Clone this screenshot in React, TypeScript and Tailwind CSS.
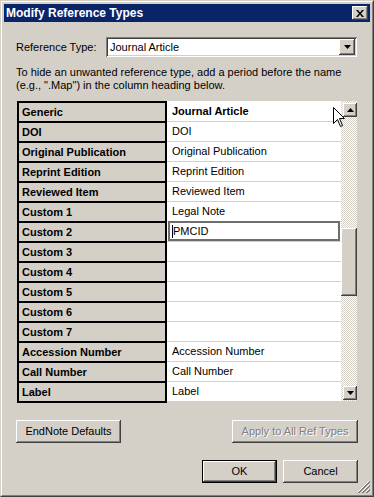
import React from 'react';

const raised =
  'bg-[#d4d0c8] shadow-[inset_-1px_-1px_#404040,inset_1px_1px_#ffffff,inset_-2px_-2px_#808080,inset_2px_2px_#d4d0c8]';
const sunken =
  'shadow-[inset_1px_1px_#808080,inset_-1px_-1px_#ffffff,inset_2px_2px_#404040,inset_-2px_-2px_#d4d0c8]';

const rows: [string, string][] = [
  ['Generic', 'Journal Article'],
  ['DOI', 'DOI'],
  ['Original Publication', 'Original Publication'],
  ['Reprint Edition', 'Reprint Edition'],
  ['Reviewed Item', 'Reviewed Item'],
  ['Custom 1', 'Legal Note'],
  ['Custom 2', 'PMCID'],
  ['Custom 3', ''],
  ['Custom 4', ''],
  ['Custom 5', ''],
  ['Custom 6', ''],
  ['Custom 7', ''],
  ['Accession Number', 'Accession Number'],
  ['Call Number', 'Call Number'],
  ['Label', 'Label'],
];

const Arrow = ({ up }: { up?: boolean }) => (
  <svg width="7" height="4" viewBox="0 0 7 4">
    {up ? <path d="M3.5 0 L7 4 L0 4 Z" fill="#000" /> : <path d="M0 0 L7 0 L3.5 4 Z" fill="#000" />}
  </svg>
);

const Button = ({
  children,
  className = '',
  disabled,
}: {
  children: React.ReactNode;
  className?: string;
  disabled?: boolean;
}) => (
  <div
    className={`${raised} h-[23px] flex items-center justify-center ${
      disabled ? 'text-[#808080] [text-shadow:1px_1px_0_#ffffff]' : 'text-black'
    } ${className}`}
  >
    {children}
  </div>
);

export default function App() {
  return (
    <div className="relative w-[374px] h-[497px] bg-[#d4d0c8] font-['Liberation_Sans',Arial,sans-serif] text-[11px] text-black select-none">
      <div className="w-full h-full border border-t-[#d4d0c8] border-l-[#d4d0c8] border-r-[#404040] border-b-[#404040]">
        <div className="relative w-full h-full border border-t-white border-l-white border-r-[#808080] border-b-[#808080] p-[2px] flex flex-col">
          {/* title bar */}
          <div className="h-[18px] bg-[#0a246a] flex items-center justify-between pl-[2px] pr-[2px]">
            <span className="text-white font-bold text-[12px] leading-none">Modify Reference Types</span>
            <div className={`${raised} w-[16px] h-[14px] flex items-center justify-center`}>
              <svg width="8" height="7" viewBox="0 0 8 7">
                <path d="M0 0 L2 0 L4 2.5 L6 0 L8 0 L5 3.5 L8 7 L6 7 L4 4.5 L2 7 L0 7 L3 3.5 Z" fill="#000" />
              </svg>
            </div>
          </div>

          {/* body */}
          <div className="flex-1 flex flex-col px-[12px]">
            <div className="mt-[15px] flex items-center h-[20px]">
              <span className="w-[90px]">Reference Type:</span>
              <div className={`${sunken} bg-white w-[251px] h-[20px] p-[2px] flex items-center`}>
                <span className="flex-1 pl-[2px]">Journal Article</span>
                <div className={`${raised} w-[16px] h-[16px] flex items-center justify-center`}>
                  <Arrow />
                </div>
              </div>
            </div>

            <p className="mt-[9px] leading-[13px]">
              To hide an unwanted reference type, add a period before the name
              <br />
              (e.g., ".Map") in the column heading below.
            </p>

            <div className="mt-[9px] ml-[1px] flex items-start">
              {/* generic column */}
              <div className="w-[150px] border-l-2 border-r-2 border-b-2 border-black">
                {rows.map(([g]) => (
                  <div key={g} className="h-[20px] border-t-2 border-black flex items-center pl-[3px] font-bold">
                    {g}
                  </div>
                ))}
              </div>

              {/* journal article column */}
              <div className="w-[174px] bg-white">
                {rows.map(([g, v], i) =>
                  g === 'Custom 2' ? (
                    <div key={g} className="h-[20px] border-t border-[#d4d0c8] pl-[1px]">
                      <div className="h-[20px] -mt-[1px] w-[172px] border-2 border-[#6e6e6e] bg-white flex items-center pl-[2px]">
                        <span className="w-[1px] h-[13px] bg-black" />
                        <span>PMCID</span>
                      </div>
                    </div>
                  ) : (
                    <div
                      key={g}
                      className={`h-[20px] flex items-center pl-[5px] ${i > 0 ? 'border-t border-[#d4d0c8]' : ''} ${
                        i === 0 ? 'font-bold' : ''
                      }`}
                    >
                      {v}
                    </div>
                  )
                )}
              </div>

              {/* scrollbar */}
              <div className="w-[16px] h-[300px] flex flex-col bg-[image:repeating-conic-gradient(#ffffff_0%_25%,#d4d0c8_0%_50%)] bg-[length:2px_2px]">
                <div className={`${raised} ml-[2px] mt-[2px] w-[14px] h-[14px] flex items-center justify-center`}>
                  <Arrow up />
                </div>
                <div className={`${raised} mt-[111px] w-[16px] h-[68px]`} />
                <div className={`${raised} mt-auto mb-[1px] ml-[2px] w-[14px] h-[14px] flex items-center justify-center`}>
                  <Arrow />
                </div>
              </div>
            </div>

            <div className="mt-[17px] flex justify-between">
              <Button className="w-[105px]">EndNote Defaults</Button>
              <Button className="w-[126px]" disabled>
                Apply to All Ref Types
              </Button>
            </div>

            <div className="mt-[17px] flex justify-end gap-[6px]">
              <div className="w-[75px] h-[23px] border border-black">
                <div className={`${raised} w-full h-full flex items-center justify-center`}>OK</div>
              </div>
              <Button className="w-[75px]">Cancel</Button>
            </div>
          </div>

          {/* size grip */}
          <svg className="absolute right-[2px] bottom-[2px]" width="12" height="12" viewBox="0 0 12 12">
            <path d="M11 0 L0 11" stroke="#ffffff" />
            <path d="M12 0 L0 12 M12 1 L1 12" stroke="#808080" />
            <path d="M11 4 L4 11" stroke="#ffffff" />
            <path d="M12 4 L4 12 M12 5 L5 12" stroke="#808080" />
            <path d="M11 8 L8 11" stroke="#ffffff" />
            <path d="M12 8 L8 12 M12 9 L9 12" stroke="#808080" />
          </svg>
        </div>
      </div>

      {/* mouse pointer */}
      <svg className="absolute left-[333px] top-[107px]" width="13" height="21" viewBox="0 0 13 21">
        <path d="M0.5 0.5 L0.5 16.5 L4.5 12.5 L7.5 19.5 L9.5 18.5 L6.5 11.5 L11.5 11.5 Z" fill="#ffffff" stroke="#000000" />
      </svg>
    </div>
  );
}
